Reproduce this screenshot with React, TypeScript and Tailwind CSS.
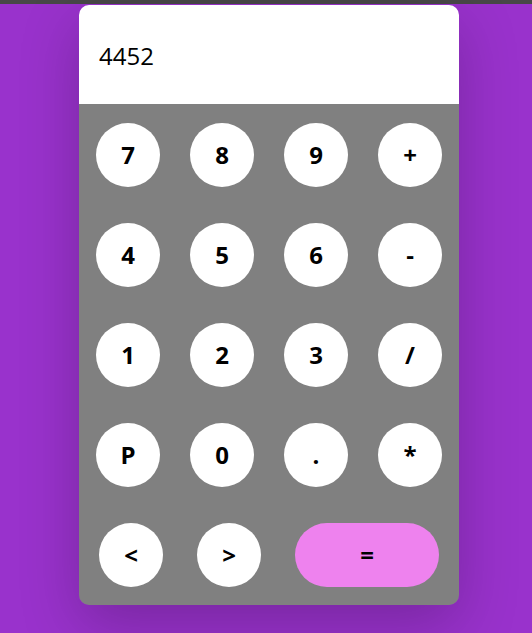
import React from "react";

const rows = [
  ["7", "8", "9", "+"],
  ["4", "5", "6", "-"],
  ["1", "2", "3", "/"],
  ["P", "0", ".", "*"],
];

function Circle({ label }: { label: string }) {
  return (
    <div className="w-[64px] h-[64px] rounded-full bg-white flex items-center justify-center text-[24px] font-bold text-black leading-none">
      {label}
    </div>
  );
}

export default function App() {
  return (
    <div className="min-h-[633px] flex flex-col bg-[#9932cc]" style={{ fontFamily: '"Open Sans", "Noto Sans", sans-serif' }}>
      <div className="h-[4px] bg-[#484848]" />
      <div className="ml-[79px] mt-[1px] w-[380px] rounded-[10px] overflow-hidden shadow-[0_20px_60px_rgba(0,0,0,0.22)]">
        <div className="h-[99px] bg-white flex items-center pl-[20px] pt-[3px] text-[24px] text-black">
          4452
        </div>
        <div className="bg-[#808080] pt-[19px] pb-[18px] flex flex-col gap-[36px]">
          {rows.map((r, i) => (
            <div key={i} className="flex px-[17px] gap-[30px]">
              {r.map((l) => (
                <Circle key={l} label={l} />
              ))}
            </div>
          ))}
          <div className="flex px-[20px] gap-[34px]">
            <Circle label="<" />
            <Circle label=">" />
            <div className="w-[144px] h-[64px] rounded-full bg-[#ee82ee] flex items-center justify-center text-[24px] font-bold text-black leading-none">
              =
            </div>
          </div>
        </div>
      </div>
    </div>
  );
}
